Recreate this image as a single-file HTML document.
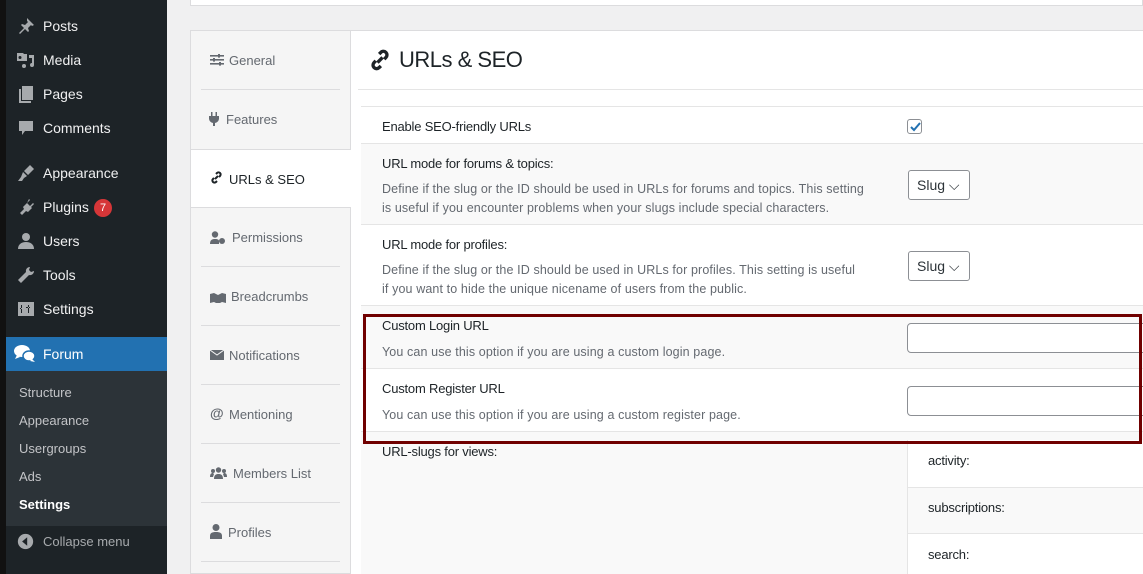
<!DOCTYPE html>
<html><head><meta charset="utf-8"><style>
*{box-sizing:border-box;margin:0;padding:0}
body{width:1143px;height:574px;overflow:hidden;background:#f0f0f1;font-family:"Liberation Sans",sans-serif;position:relative}
.side{position:absolute;left:0;top:0;width:167px;height:574px;background:#1d2327}
.strip{position:absolute;left:0;top:0;width:6px;height:574px;background:#111}
.mi{position:absolute;left:43px;color:#f0f0f1;font-size:14px;line-height:20px}
.ic{position:absolute;left:16px;width:20px;height:20px;fill:#a7aaad}
.forum{position:absolute;left:6px;top:337px;width:161px;height:34px;background:#2271b1}
.sub{position:absolute;left:6px;top:371px;width:161px;height:155px;background:#2c3338}
.si{position:absolute;left:19px;color:#c3c4c7;font-size:13px;line-height:16px}
.abs{position:absolute}
.tabs{position:absolute;left:190px;top:30px;width:161px;height:544px;background:#f5f5f5;border:1px solid #dcdcde}
.tab{position:absolute;left:0;width:160px;height:59px;font-size:13px;color:#646970;line-height:59px}
.sep{position:absolute;left:10px;width:139px;height:1px;background:#dcdcde}
.content{position:absolute;left:351px;top:30px;width:792px;height:544px;background:#fff;border-top:1px solid #dcdcde}
.row{position:absolute;left:361px;width:782px;border-top:1px solid #e5e5e5}
.lab{position:absolute;left:21px;font-size:13px;color:#1d2327;letter-spacing:-0.2px}
.desc{position:absolute;left:21px;font-size:12.5px;color:#646970;line-height:19px;letter-spacing:0.12px}
.sel{position:absolute;left:547px;width:62px;height:30px;border:1px solid #8c8f94;border-radius:3px;background:#fff;font-size:14px;color:#2c3338;padding:6px 0 0 8px}
.inp{position:absolute;left:546px;width:260px;height:30px;border:1px solid #8c8f94;border-radius:4px;background:#fff}
</style></head><body>
<div class="side"></div><div class="strip"></div>
<svg class="ic" style="top:16px" viewBox="0 0 20 20"><path d="M11 2l7 7-2 1-1-1-3 3 1 3-1 1-3-3-5 5-1-1 5-5-3-3 1-1 3 1 3-3-1-1z"/></svg><div class="mi" style="top:16px">Posts</div>
<svg class="ic" style="top:50px" viewBox="0 0 20 20"><path d="M1 3h6l1 1h3v7H1zM4 6a1.5 1.5 0 100 3 1.5 1.5 0 000-3zM13 5h5v10a2 2 0 11-2-2V8h-3z"/><circle cx="8" cy="16" r="2"/></svg><div class="mi" style="top:50px">Media</div>
<svg class="ic" style="top:84px" viewBox="0 0 20 20"><path d="M6 2h11v14H6zM3 5h2v12h10v2H3z"/></svg><div class="mi" style="top:84px">Pages</div>
<svg class="ic" style="top:118px" viewBox="0 0 20 20"><path d="M3 3h14v10H9l-3 4v-4H3z"/></svg><div class="mi" style="top:118px">Comments</div>
<svg class="ic" style="top:163px" viewBox="0 0 20 20"><path d="M14 2l4 4-6 6-4-4zM7 9l4 4-3 2-2 3-4 0 3-4z"/></svg><div class="mi" style="top:163px">Appearance</div>
<svg class="ic" style="top:197px" viewBox="0 0 20 20"><path d="M13 2l1 1-3 3 3 3 3-3 1 1-3 3 1 1-4 4-2-1-4 4-2-2 4-4-1-2 4-4z"/></svg><div class="mi" style="top:197px">Plugins</div>
<div class="abs" style="left:94px;top:199px;width:18px;height:18px;border-radius:9px;background:#d63638;color:#fff;font-size:11px;text-align:center;line-height:18px">7</div>
<svg class="ic" style="top:231px" viewBox="0 0 20 20"><circle cx="10" cy="6" r="4"/><path d="M2 18c0-5 4-7 8-7s8 2 8 7z"/></svg><div class="mi" style="top:231px">Users</div>
<svg class="ic" style="top:265px" viewBox="0 0 20 20"><path d="M14 2a4 4 0 00-4 5L2 15l3 3 8-8a4 4 0 005-4l-3 1-2-2z"/></svg><div class="mi" style="top:265px">Tools</div>
<svg class="ic" style="top:299px" viewBox="0 0 20 20"><path d="M2 3h16v14H2zM5 6v8h1V6zm1 3H4v1h2zm6-3v8h1V6zm-2 2h4v1h-4z" fill-rule="evenodd"/></svg><div class="mi" style="top:299px">Settings</div>
<div class="forum"></div>
<svg class="abs" style="left:14px;top:344px" width="22" height="20" viewBox="0 0 22 20" fill="#fff"><ellipse cx="8" cy="7" rx="8" ry="6"/><path d="M3 11l-2 4 5-2z"/><ellipse cx="15" cy="12" rx="6" ry="5" stroke="#2271b1" stroke-width="1.5"/><path d="M18 15l3 3-5-1z"/></svg>
<div class="mi" style="top:344px;color:#fff">Forum</div>
<div class="abs" style="left:159px;top:346px;width:0;height:0;border:8px solid transparent;border-right-color:#f0f0f1"></div>
<div class="sub"></div>
<div class="si" style="top:385px">Structure</div>
<div class="si" style="top:413px">Appearance</div>
<div class="si" style="top:441px">Usergroups</div>
<div class="si" style="top:469px">Ads</div>
<div class="si" style="top:497px;color:#fff;font-weight:bold">Settings</div>
<svg class="abs" style="left:17px;top:533px" width="17" height="17" viewBox="0 0 20 20"><circle cx="10" cy="10" r="9" fill="#a7aaad"/><path d="M12 5v10l-6-5z" fill="#1d2327"/></svg>
<div class="mi" style="top:532px;color:#a7aaad;font-size:13px">Collapse menu</div>

<div class="abs" style="left:190px;top:-1px;width:953px;height:7px;background:#fff;border:1px solid #dcdcde"></div>

<div class="tabs">
<div class="tab" style="top:0;padding-left:38px">General</div>
<div class="sep" style="top:58px"></div>
<div class="tab" style="top:59px;padding-left:35px">Features</div>
<div class="tab" style="top:118px;background:#fff;width:161px;color:#1d2327;padding-left:38px;border-top:1px solid #dcdcde;border-bottom:1px solid #dcdcde">URLs &amp; SEO</div>
<div class="tab" style="top:177px;padding-left:41px">Permissions</div>
<div class="sep" style="top:235px"></div>
<div class="tab" style="top:236px;padding-left:40px">Breadcrumbs</div>
<div class="sep" style="top:294px"></div>
<div class="tab" style="top:295px;padding-left:38px">Notifications</div>
<div class="sep" style="top:353px"></div>
<div class="tab" style="top:354px;padding-left:38px">Mentioning</div>
<div class="sep" style="top:412px"></div>
<div class="tab" style="top:413px;padding-left:42px">Members List</div>
<div class="sep" style="top:471px"></div>
<div class="tab" style="top:472px;padding-left:37px">Profiles</div>
<div class="sep" style="top:530px"></div>
</div>
<svg class="abs" style="left:210px;top:54px" width="14" height="12" viewBox="0 0 14 12" fill="#646970"><rect y="1" width="14" height="1.6"/><rect y="5" width="14" height="1.6"/><rect y="9" width="14" height="1.6"/><rect x="8" y="0" width="2" height="3.6"/><rect x="3" y="4" width="2" height="3.6"/><rect x="9" y="8" width="2" height="3.6"/></svg>
<svg class="abs" style="left:209px;top:112px" width="10" height="14" viewBox="0 0 10 14" fill="#646970"><rect x="2" y="0" width="1.5" height="4"/><rect x="6.5" y="0" width="1.5" height="4"/><path d="M0 4h10v3a5 5 0 01-4 4v3H4v-3A5 5 0 010 7z"/></svg>
<svg class="abs" style="left:210px;top:171px" width="13" height="13" viewBox="0 0 13 13" fill="none" stroke="#1d2327" stroke-width="2"><path d="M5 8l3-3M6 3l1-1a2 2 0 013 3l-1 1M7 10l-1 1a2 2 0 01-3-3l1-1"/></svg>
<svg class="abs" style="left:210px;top:231px" width="16" height="13" viewBox="0 0 16 13" fill="#646970"><circle cx="5" cy="3.5" r="3.2"/><path d="M0 13c0-4 2-5 5-5s4 1 4 2v3z"/><circle cx="12" cy="10" r="3"/></svg>
<svg class="abs" style="left:210px;top:290px" width="16" height="13" viewBox="0 0 16 13" fill="#646970"><path d="M0 4l4-1 4 2 4-2 4 1v9l-4-1-4 2-4-2-4 1z"/></svg>
<svg class="abs" style="left:210px;top:350px" width="14" height="10" viewBox="0 0 14 10" fill="#646970"><path d="M0 0h14v10H0z"/><path d="M0 0l7 5 7-5" stroke="#f5f5f5" fill="none"/></svg>
<div class="abs" style="left:210px;top:405px;font-size:14px;font-weight:bold;color:#646970">@</div>
<svg class="abs" style="left:210px;top:467px" width="17" height="12" viewBox="0 0 17 12" fill="#646970"><circle cx="8.5" cy="3" r="2.7"/><circle cx="3" cy="4" r="2"/><circle cx="14" cy="4" r="2"/><path d="M4 12c0-4 2-5 4.5-5s4.5 1 4.5 5zM0 10c0-3 1-4 3-4l1 1-1 3zM17 10c0-3-1-4-3-4l-1 1 1 3z"/></svg>
<svg class="abs" style="left:210px;top:524px" width="12" height="15" viewBox="0 0 12 15" fill="#646970"><circle cx="6" cy="3.5" r="3.5"/><path d="M0 15v-3c0-3 2-4 6-4s6 1 6 4v3z"/></svg>

<div class="content"></div>
<svg class="abs" style="left:369px;top:49px" width="22" height="22" viewBox="0 0 13 13" fill="none" stroke="#1d2327" stroke-width="2"><path d="M5 8l3-3M6 3l1-1a2 2 0 013 3l-1 1M7 10l-1 1a2 2 0 01-3-3l1-1"/></svg>
<div class="abs" style="left:399px;top:47px;font-size:22px;color:#1d2327;letter-spacing:-0.5px">URLs &amp; SEO</div>
<div class="abs" style="left:358px;top:89px;width:785px;height:1px;background:#e5e5e5"></div>
<div class="abs" style="left:361px;top:106px;width:1px;height:468px;background:#e5e5e5"></div>

<div class="row" style="top:106px;height:37px;background:#fff"><div class="lab" style="top:12px">Enable SEO-friendly URLs</div>
<div class="abs" style="left:546px;top:12px;width:15px;height:15px;border:1px solid #8c8f94;border-radius:3px;background:#fff"></div>
<svg class="abs" style="left:547px;top:13px" width="14" height="14" viewBox="0 0 14 14"><path d="M3 7l3 3 6-7" stroke="#2271b1" stroke-width="2" fill="none"/></svg></div>
<div class="row" style="top:143px;height:81px;background:#f9f9f9"><div class="lab" style="top:12px">URL mode for forums &amp; topics:</div>
<div class="desc" style="top:36px">Define if the slug or the ID should be used in URLs for forums and topics. This setting<br>is useful if you encounter problems when your slugs include special characters.</div>
<div class="sel" style="top:26px">Slug ⌵</div></div>
<div class="row" style="top:224px;height:81px;background:#fff"><div class="lab" style="top:12px">URL mode for profiles:</div>
<div class="desc" style="top:36px">Define if the slug or the ID should be used in URLs for profiles. This setting is useful<br>if you want to hide the unique nicename of users from the public.</div>
<div class="sel" style="top:26px">Slug ⌵</div></div>
<div class="row" style="top:305px;height:63px;background:#f9f9f9"><div class="lab" style="top:12px">Custom Login URL</div>
<div class="desc" style="top:37px">You can use this option if you are using a custom login page.</div>
<div class="inp" style="top:17px"></div></div>
<div class="row" style="top:368px;height:63px;background:#fff"><div class="lab" style="top:12px">Custom Register URL</div>
<div class="desc" style="top:37px">You can use this option if you are using a custom register page.</div>
<div class="inp" style="top:17px"></div></div>
<div class="row" style="top:431px;height:143px;background:#f9f9f9"><div class="lab" style="top:12px">URL-slugs for views:</div></div>
<div class="abs" style="left:907px;top:440px;width:236px;height:134px;background:#fff;border-left:1px solid #e5e5e5"></div>
<div class="abs" style="left:907px;top:487px;width:236px;height:47px;background:#f9f9f9;border:1px solid #e5e5e5;border-right:0"></div>
<div class="lab abs" style="left:928px;top:453px">activity:</div>
<div class="lab abs" style="left:928px;top:500px">subscriptions:</div>
<div class="lab abs" style="left:928px;top:547px">search:</div>

<div class="abs" style="left:363px;top:314px;width:779px;height:130px;border:3px solid #700000"></div>
</body></html>
